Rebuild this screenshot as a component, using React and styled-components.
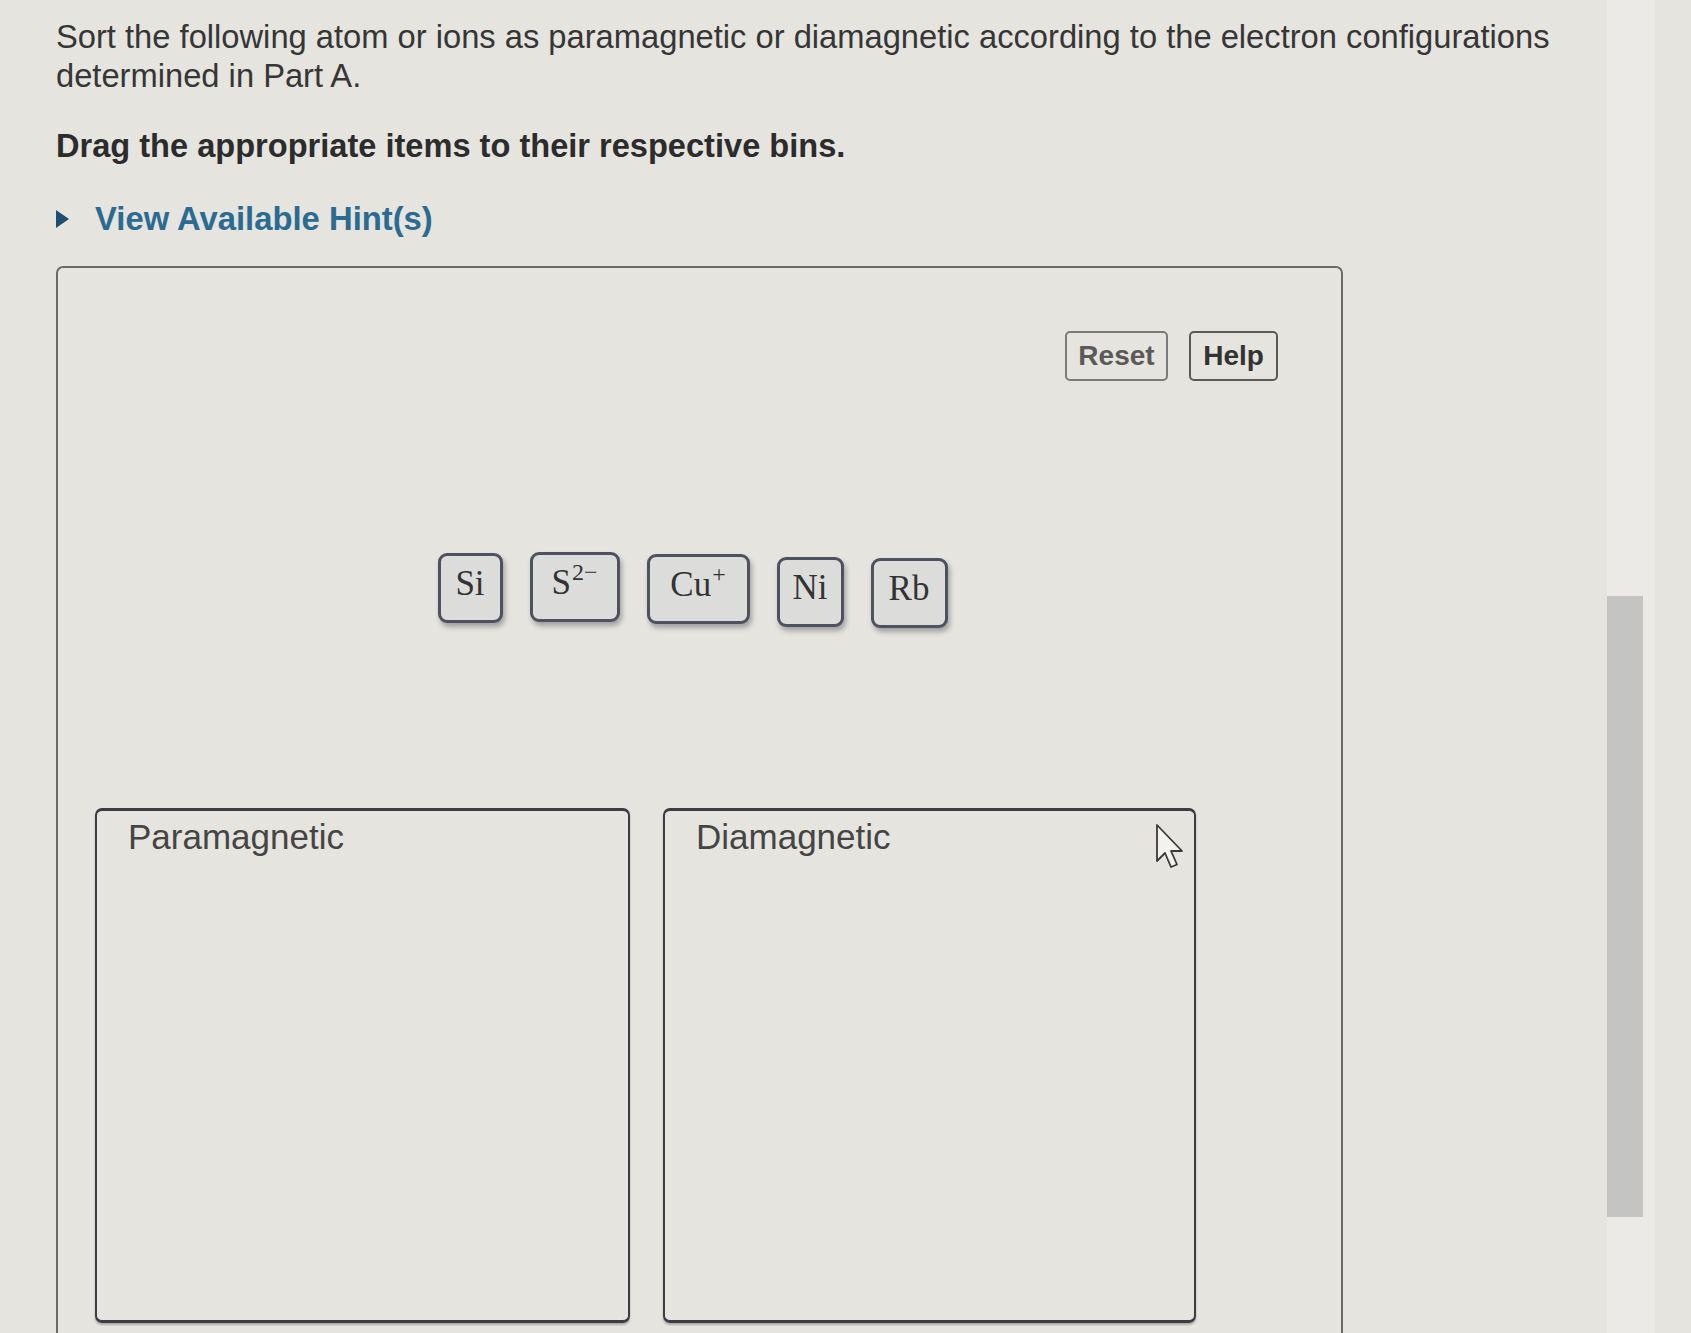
import React from 'react';
import styled, { createGlobalStyle } from 'styled-components';

const GlobalStyle = createGlobalStyle`
    html, body {
        margin: 0;
        padding: 0;
        overflow: hidden;
        background: #e5e4de;
    }
    body {
        font-family: "Liberation Sans", Arial, sans-serif;
        color: #333;
    }
`;

const Page = styled.div`
    display: flex;
    width: 1691px;
    height: 1333px;
    overflow: hidden;
`;

const Main = styled.div`
    flex: 1;
    padding: 17px 0 0 56px;
`;

const Prompt = styled.p`
    margin: 0;
    font-size: 32.7px;
    line-height: 39px;
    color: #363636;
    white-space: nowrap;
`;

const Instruction = styled.p`
    margin: 31px 0 0;
    font-size: 32.6px;
    line-height: 39px;
    font-weight: bold;
    color: #2c2c2c;
`;

const HintToggle = styled.div`
    margin-top: 34px;
    display: flex;
    align-items: center;
    gap: 26px;
    font-size: 32.8px;
    line-height: 39px;
    font-weight: bold;
    color: #2b6b91;
`;

const Caret = styled.span`
    width: 0;
    height: 0;
    border-top: 9px solid transparent;
    border-bottom: 9px solid transparent;
    border-left: 13px solid #1e4f70;
`;

const Panel = styled.div`
    margin-top: 28px;
    width: 1287px;
    height: 1100px;
    box-sizing: border-box;
    border: 2px solid #6a6a68;
    border-radius: 7px;
`;

const Toolbar = styled.div`
    display: flex;
    justify-content: flex-end;
    gap: 21px;
    padding: 63px 63px 0 0;
`;

const ToolButton = styled.button`
    width: ${p => p.$w}px;
    height: 50px;
    box-sizing: border-box;
    border: 2px solid ${p => (p.$muted ? '#7a7a78' : '#5a5a58')};
    border-radius: 5px;
    background: transparent;
    font-family: "Liberation Sans", Arial, sans-serif;
    font-size: 28px;
    font-weight: bold;
    color: ${p => (p.$muted ? '#5a5a5a' : '#333')};
    padding: 0;
`;

const TileRow = styled.div`
    margin-top: 172px;
    display: flex;
    justify-content: center;
    align-items: flex-start;
    gap: 27px;
    padding-right: 14px;
`;

const Tile = styled.div`
    width: ${p => p.$w}px;
    height: 70px;
    margin-top: ${p => p.$dy || 0}px;
    box-sizing: border-box;
    display: flex;
    align-items: center;
    justify-content: center;
    padding-bottom: 10px;
    border: 3px solid #4e5160;
    border-radius: 9px;
    background: #dcdcdb;
    box-shadow: 2px 4px 5px rgba(40, 40, 50, 0.35);
    font-family: "Liberation Serif", "Times New Roman", serif;
    font-size: 35px;
    line-height: 1;
    color: #333;
`;

const Sup = styled.span`
    position: relative;
    top: -0.42em;
    margin-left: 1px;
    font-size: 24px;
    line-height: 0;
`;

const BinRow = styled.div`
    margin-top: 180px;
    display: flex;
    gap: 33px;
    padding-left: 37px;
`;

const Bin = styled.div`
    position: relative;
    width: ${p => p.$w}px;
    height: 515px;
    box-sizing: border-box;
    padding: 6px 0 0 31px;
    border: 2px solid #3c3c44;
    border-top-width: 3px;
    border-bottom-width: 3px;
    border-radius: 7px;
    box-shadow: 0 2px 2px rgba(0, 0, 0, 0.25);
    font-size: 35px;
    line-height: 40px;
    color: #454545;
`;

const Pointer = styled.svg`
    position: absolute;
    right: 6px;
    top: 12px;
`;

const ScrollArea = styled.div`
    width: 100px;
    display: flex;
    padding-left: 16px;
    box-sizing: border-box;
`;

const Track = styled.div`
    width: 48px;
    height: 100%;
    background: #ebeae6;
`;

const Thumb = styled.div`
    width: 36px;
    height: 621px;
    margin-top: 596px;
    background: #c4c4c2;
`;

const items = [
    { key: 'si', w: 65, dy: 0, label: 'Si' },
    { key: 's', w: 90, dy: -1, label: 'S', sup: '2−' },
    { key: 'cu', w: 103, dy: 1, label: 'Cu', sup: '+' },
    { key: 'ni', w: 67, dy: 4, label: 'Ni' },
    { key: 'rb', w: 77, dy: 5, label: 'Rb' },
];

const App = () => (
    <Page>
        <GlobalStyle />
        <Main>
            <Prompt>
                Sort the following atom or ions as paramagnetic or diamagnetic according to the electron configurations
                <br />
                determined in Part A.
            </Prompt>
            <Instruction>Drag the appropriate items to their respective bins.</Instruction>
            <HintToggle>
                <Caret />
                View Available Hint(s)
            </HintToggle>

            <Panel>
                <Toolbar>
                    <ToolButton $w={103} $muted>Reset</ToolButton>
                    <ToolButton $w={89}>Help</ToolButton>
                </Toolbar>

                <TileRow>
                    {items.map(item => (
                        <Tile key={item.key} $w={item.w} $dy={item.dy}>
                            {item.label}
                            {item.sup && <Sup>{item.sup}</Sup>}
                        </Tile>
                    ))}
                </TileRow>

                <BinRow>
                    <Bin $w={535}>Paramagnetic</Bin>
                    <Bin $w={533}>
                        Diamagnetic
                        {/* mouse pointer caught in the photo */}
                        <Pointer width="34" height="48" viewBox="0 0 34 48">
                            <path
                                d="M3 2 L3 38 L11 30 L17 44 L23 41.5 L17 28 L28 28 Z"
                                fill="#f2f2ef"
                                stroke="#3a3a3a"
                                strokeWidth="1.8"
                                strokeLinejoin="round"
                            />
                        </Pointer>
                    </Bin>
                </BinRow>
            </Panel>
        </Main>
        <ScrollArea>
            <Track>
                <Thumb />
            </Track>
        </ScrollArea>
    </Page>
);

export default App;
